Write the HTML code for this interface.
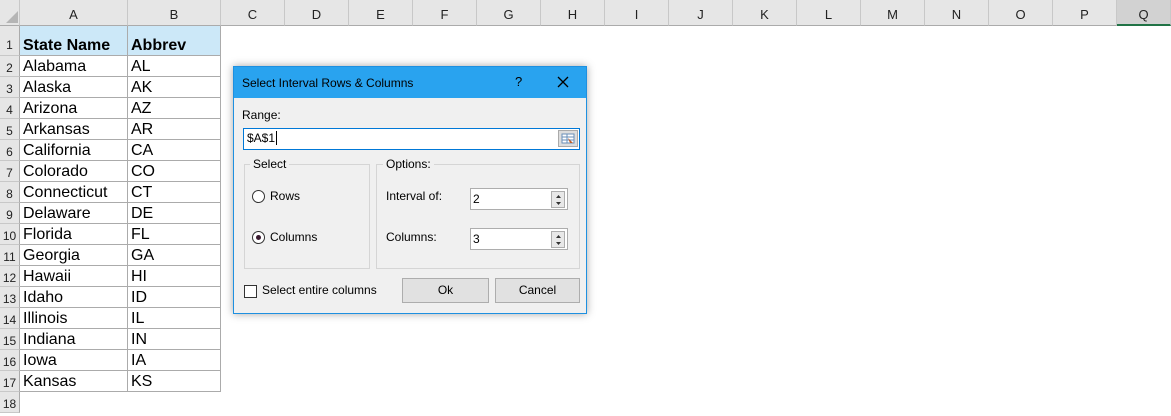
<!DOCTYPE html>
<html><head><meta charset="utf-8"><style>
*{box-sizing:border-box;margin:0;padding:0}
body{width:1171px;height:407px;overflow:hidden;background:#fff;position:relative;font-family:"Liberation Sans",Arial,sans-serif}
.a{position:absolute}
.ch{position:absolute;top:0;height:26px;background:#e6e6e6;border-right:1px solid #c8c8c8;border-bottom:1px solid #ababab;font-size:13px;color:#222;text-align:center;line-height:30px}
.rh{position:absolute;left:0;width:20px;background:#e6e6e6;border-bottom:1px solid #c8c8c8;border-right:1px solid #ababab;font-size:12px;color:#222;text-align:center}
.c{position:absolute;border-right:1px solid #ababab;border-bottom:1px solid #ababab;font-size:16px;color:#000;padding-left:3px;line-height:21px;white-space:nowrap}
.d{font-family:"Liberation Sans",Tahoma,sans-serif;font-size:12px;color:#000}
.btn{position:absolute;background:#e1e1e1;border:1px solid #adadad;text-align:center;line-height:22px}
.spin{position:absolute;width:14px;height:17px;right:2px;top:2px;border:1px solid #adadad;background:#e8e8e8}
</style></head><body>
<div class="ch" style="left:0;width:20px;background:#e6e6e6"><svg width="14" height="14" style="position:absolute;left:5px;top:10px"><polygon points="13,1 13,13 1,13" fill="#b5b5b5"/></svg></div>
<div class="ch" style="left:20px;width:108px">A</div>
<div class="ch" style="left:128px;width:93px">B</div>
<div class="ch" style="left:221px;width:64px">C</div>
<div class="ch" style="left:285px;width:64px">D</div>
<div class="ch" style="left:349px;width:64px">E</div>
<div class="ch" style="left:413px;width:64px">F</div>
<div class="ch" style="left:477px;width:64px">G</div>
<div class="ch" style="left:541px;width:64px">H</div>
<div class="ch" style="left:605px;width:64px">I</div>
<div class="ch" style="left:669px;width:64px">J</div>
<div class="ch" style="left:733px;width:64px">K</div>
<div class="ch" style="left:797px;width:64px">L</div>
<div class="ch" style="left:861px;width:64px">M</div>
<div class="ch" style="left:925px;width:64px">N</div>
<div class="ch" style="left:989px;width:64px">O</div>
<div class="ch" style="left:1053px;width:64px">P</div>
<div class="ch" style="left:1117px;width:54px;background:#d2d2d2;border-bottom:2px solid #217346">Q</div>

<div class="rh" style="top:26px;height:30px;line-height:38px">1</div>
<div class="c" style="left:20px;top:26px;width:108px;height:30px;background:#cce8f8;font-weight:bold;line-height:40px">State Name</div>
<div class="c" style="left:128px;top:26px;width:93px;height:30px;background:#cce8f8;font-weight:bold;line-height:40px">Abbrev</div>

<div class="rh" style="top:56px;height:21px;line-height:24px">2</div><div class="c" style="left:20px;top:56px;width:108px;height:21px">Alabama</div><div class="c" style="left:128px;top:56px;width:93px;height:21px">AL</div>
<div class="rh" style="top:77px;height:21px;line-height:24px">3</div><div class="c" style="left:20px;top:77px;width:108px;height:21px">Alaska</div><div class="c" style="left:128px;top:77px;width:93px;height:21px">AK</div>
<div class="rh" style="top:98px;height:21px;line-height:24px">4</div><div class="c" style="left:20px;top:98px;width:108px;height:21px">Arizona</div><div class="c" style="left:128px;top:98px;width:93px;height:21px">AZ</div>
<div class="rh" style="top:119px;height:21px;line-height:24px">5</div><div class="c" style="left:20px;top:119px;width:108px;height:21px">Arkansas</div><div class="c" style="left:128px;top:119px;width:93px;height:21px">AR</div>
<div class="rh" style="top:140px;height:21px;line-height:24px">6</div><div class="c" style="left:20px;top:140px;width:108px;height:21px">California</div><div class="c" style="left:128px;top:140px;width:93px;height:21px">CA</div>
<div class="rh" style="top:161px;height:21px;line-height:24px">7</div><div class="c" style="left:20px;top:161px;width:108px;height:21px">Colorado</div><div class="c" style="left:128px;top:161px;width:93px;height:21px">CO</div>
<div class="rh" style="top:182px;height:21px;line-height:24px">8</div><div class="c" style="left:20px;top:182px;width:108px;height:21px">Connecticut</div><div class="c" style="left:128px;top:182px;width:93px;height:21px">CT</div>
<div class="rh" style="top:203px;height:21px;line-height:24px">9</div><div class="c" style="left:20px;top:203px;width:108px;height:21px">Delaware</div><div class="c" style="left:128px;top:203px;width:93px;height:21px">DE</div>
<div class="rh" style="top:224px;height:21px;line-height:24px">10</div><div class="c" style="left:20px;top:224px;width:108px;height:21px">Florida</div><div class="c" style="left:128px;top:224px;width:93px;height:21px">FL</div>
<div class="rh" style="top:245px;height:21px;line-height:24px">11</div><div class="c" style="left:20px;top:245px;width:108px;height:21px">Georgia</div><div class="c" style="left:128px;top:245px;width:93px;height:21px">GA</div>
<div class="rh" style="top:266px;height:21px;line-height:24px">12</div><div class="c" style="left:20px;top:266px;width:108px;height:21px">Hawaii</div><div class="c" style="left:128px;top:266px;width:93px;height:21px">HI</div>
<div class="rh" style="top:287px;height:21px;line-height:24px">13</div><div class="c" style="left:20px;top:287px;width:108px;height:21px">Idaho</div><div class="c" style="left:128px;top:287px;width:93px;height:21px">ID</div>
<div class="rh" style="top:308px;height:21px;line-height:24px">14</div><div class="c" style="left:20px;top:308px;width:108px;height:21px">Illinois</div><div class="c" style="left:128px;top:308px;width:93px;height:21px">IL</div>
<div class="rh" style="top:329px;height:21px;line-height:24px">15</div><div class="c" style="left:20px;top:329px;width:108px;height:21px">Indiana</div><div class="c" style="left:128px;top:329px;width:93px;height:21px">IN</div>
<div class="rh" style="top:350px;height:21px;line-height:24px">16</div><div class="c" style="left:20px;top:350px;width:108px;height:21px">Iowa</div><div class="c" style="left:128px;top:350px;width:93px;height:21px">IA</div>
<div class="rh" style="top:371px;height:21px;line-height:24px">17</div><div class="c" style="left:20px;top:371px;width:108px;height:21px">Kansas</div><div class="c" style="left:128px;top:371px;width:93px;height:21px">KS</div>
<div class="rh" style="top:392px;height:21px;line-height:24px">18</div>

<!-- dialog -->
<div class="a d" style="left:233px;top:66px;width:354px;height:248px;background:#f0f0f0;border:1px solid #1e90e0;box-shadow:0 0 8px rgba(0,0,0,.35)">
 <div class="a" style="left:0;top:0;width:352px;height:31px;background:#29a3ef"></div>
 <div class="a" style="left:8px;top:9px;font-size:12px">Select Interval Rows &amp; Columns</div>
 <div class="a" style="left:281px;top:7px;font-size:13px">?</div>
 <svg class="a" style="left:323px;top:9px" width="12" height="12"><path d="M1 1L11 11M11 1L1 11" stroke="#000" stroke-width="1.3"/></svg>
 <div class="a" style="left:8px;top:41px">Range:</div>
 <div class="a" style="left:9px;top:61px;width:337px;height:22px;background:#fff;border:1px solid #0078d7"></div>
 <div class="a" style="left:13px;top:64px">$A$1<span style="border-left:1px solid #000;margin-left:1px"></span></div>
 <div class="a" style="left:324px;top:63px;width:20px;height:17px;background:#ddd;border:1px solid #aaa"><svg width="18" height="15"><rect x="3" y="3" width="12" height="9" fill="#fff" stroke="#6a8fb8"/><path d="M3 6H15M3 9H15M8 3V12" stroke="#6a8fb8"/><path d="M9 7l5 5-3 0z" fill="#c0602a"/></svg></div>
 <div class="a" style="left:10px;top:97px;width:126px;height:105px;border:1px solid #d5d5d5"></div>
 <div class="a" style="left:16px;top:90px;background:#f0f0f0;padding:0 3px">Select</div>
 <div class="a" style="left:142px;top:97px;width:204px;height:105px;border:1px solid #d5d5d5"></div>
 <div class="a" style="left:149px;top:90px;background:#f0f0f0;padding:0 3px">Options:</div>
 <div class="a" style="left:18px;top:123px;width:13px;height:13px;border:1px solid #333;border-radius:50%;background:#fff"></div>
 <div class="a" style="left:36px;top:122px">Rows</div>
 <div class="a" style="left:18px;top:164px;width:13px;height:13px;border:1px solid #333;border-radius:50%;background:#fff"><div class="a" style="left:3px;top:3px;width:5px;height:5px;border-radius:50%;background:#3a1a30"></div></div>
 <div class="a" style="left:36px;top:163px">Columns</div>
 <div class="a" style="left:152px;top:122px">Interval of:</div>
 <div class="a" style="left:236px;top:121px;width:98px;height:22px;background:#fff;border:1px solid #adadad"><span class="a" style="left:2px;top:3px">2</span><div class="spin"><svg width="12" height="15"><path d="M4 6l2.5-3 2.5 3z M4 10l2.5 3 2.5-3z" fill="#333"/></svg></div></div>
 <div class="a" style="left:152px;top:163px">Columns:</div>
 <div class="a" style="left:236px;top:161px;width:98px;height:22px;background:#fff;border:1px solid #adadad"><span class="a" style="left:2px;top:3px">3</span><div class="spin"><svg width="12" height="15"><path d="M4 6l2.5-3 2.5 3z M4 10l2.5 3 2.5-3z" fill="#333"/></svg></div></div>
 <div class="a" style="left:10px;top:218px;width:13px;height:13px;border:1px solid #333;background:#fff"></div>
 <div class="a" style="left:28px;top:216px">Select entire columns</div>
 <div class="btn" style="left:168px;top:211px;width:87px;height:25px">Ok</div>
 <div class="btn" style="left:261px;top:211px;width:85px;height:25px">Cancel</div>
</div>
</body></html>
